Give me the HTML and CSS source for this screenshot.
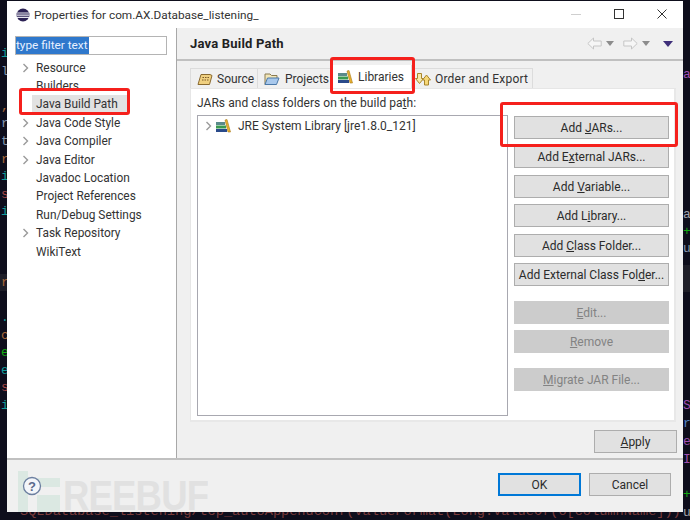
FILE: index.html
```html
<!DOCTYPE html>
<html lang="en">
<head>
<meta charset="utf-8">
<title>Properties for com.AX.Database_listening_</title>
<link rel="stylesheet" href="styles.css">
</head>
<body>
<div class="code code-left">
  <div class="teal">i</div><div class="steel">l</div><div class="rust">&nbsp;</div><div class="rust">,</div><div class="steel">r</div><div class="steel">t</div><div class="rust">r</div><div class="teal">i</div><div class="red">s</div><div class="teal">i</div>
  <div>&nbsp;</div><div>&nbsp;</div><div>&nbsp;</div><div class="rust band">r</div><div>&nbsp;</div><div class="teal">.</div><div class="rust">c</div><div class="green">e</div><div class="teal">e</div><div class="red">s</div><div class="teal">i</div>
</div>
<div class="code code-right">
  <div class="purple">a</div>
  <div class="group-b"><div class="grey">a</div><div class="green">+</div><div class="steel">u</div></div>
  <div class="band band-r">&nbsp;</div>
  <div class="group-c"><div class="purple">S</div><div class="blue">r</div><div class="purple">e</div><div class="purple">I</div><div>&nbsp;</div><div class="green">+</div><div class="grey">u</div></div>
</div>
<div class="code-bottom">SQLDatabase_listening/tcp_autoAppendConf(valueFormat(Long.valueOf(o[columnName]))</div>

<div class="window">
  <header class="titlebar">
    <svg class="app-icon" viewBox="0 0 14 14"><circle cx="7" cy="7" r="6.5" fill="#2c2255"/><path d="M1 5h12M.6 7.2h12.8M1 9.4h12" stroke="#e8e8f0" stroke-width="1.2"/></svg>
    <span class="title">Properties for com.AX.Database_listening_</span>
    <div class="winctl">
      <svg viewBox="0 0 10 10" class="wc"><path d="M0 5.500h10" stroke="#cfcfcf"/></svg>
      <svg viewBox="0 0 10 10" class="wc"><rect x=".5" y=".5" width="9" height="9" fill="none" stroke="#333"/></svg>
      <svg viewBox="0 0 10 10" class="wc"><path d="M.5.5l9 9M9.500.5l-9 9" stroke="#333"/></svg>
    </div>
  </header>

  <div class="main">
    <aside class="side">
      <div class="filter"><span class="filter-sel">type filter text</span></div>
      <ul class="tree">
        <li><svg class="chev" viewBox="0 0 7 10"><path d="M1.500 1l4 4-4 4" fill="none" stroke="#9a9a9a" stroke-width="1.400"/></svg>Resource</li>
        <li>Builders</li>
        <li class="sel"><span>Java Build Path</span></li>
        <li><svg class="chev" viewBox="0 0 7 10"><path d="M1.500 1l4 4-4 4" fill="none" stroke="#9a9a9a" stroke-width="1.400"/></svg>Java Code Style</li>
        <li><svg class="chev" viewBox="0 0 7 10"><path d="M1.500 1l4 4-4 4" fill="none" stroke="#9a9a9a" stroke-width="1.400"/></svg>Java Compiler</li>
        <li><svg class="chev" viewBox="0 0 7 10"><path d="M1.500 1l4 4-4 4" fill="none" stroke="#9a9a9a" stroke-width="1.400"/></svg>Java Editor</li>
        <li>Javadoc Location</li>
        <li>Project References</li>
        <li>Run/Debug Settings</li>
        <li><svg class="chev" viewBox="0 0 7 10"><path d="M1.500 1l4 4-4 4" fill="none" stroke="#9a9a9a" stroke-width="1.400"/></svg>Task Repository</li>
        <li>WikiText</li>
      </ul>
    </aside>

    <section class="content">
      <div class="head">
        <h1>Java Build Path</h1>
        <div class="nav">
          <svg class="nav-arrow" viewBox="0 0 15 13"><path d="M.8 6.500L6.500 1v3h7.700v5H6.500v3z" fill="#f6f6f6" stroke="#c6c6c6"/></svg>
          <span class="drop"></span>
          <svg class="nav-arrow" viewBox="0 0 15 13"><path d="M14.200 6.500L8.500 1v3H.8v5h7.700v3z" fill="#f6f6f6" stroke="#c6c6c6"/></svg>
          <span class="drop"></span>
          <span class="drop drop-menu"></span>
        </div>
      </div>

      <div class="tabs">
        <div class="tab tab-source">
          <svg class="tab-ic" viewBox="0 0 16 14"><path d="M1 12.500L4 2.500h9l2 1-2.500 9z" fill="#f0d080" stroke="#8a6a30"/><path d="M5.500 5.500h7M5 8h6.500" stroke="#7a5a28" stroke-dasharray="1.500 1"/></svg>
          Source</div>
        <div class="tab tab-projects">
          <svg class="tab-ic" viewBox="0 0 16 14"><path d="M1 12.500V2h5l1.500 1.500H13V6" fill="#f2e6b8" stroke="#8a7a50"/><path d="M1 12.500L3.500 6H15l-2.500 6.500z" fill="#a8c8ec" stroke="#4a78a8"/></svg>
          Projects</div>
        <div class="tab tab-active">
          <svg class="tab-ic" viewBox="0 0 16 14"><use href="#lib"/></svg>
          Libraries</div>
        <div class="tab tab-order">
          <svg class="tab-ic" viewBox="0 0 16 14"><path d="M2 1h4v5h2L4 11 0 6h2z" transform="translate(.5 .5)" fill="#f7e9a8" stroke="#a8852c"/><path d="M10 13V8H8l4-5 4 5h-2v5z" transform="translate(-.5 0)" fill="#f7d878" stroke="#a8852c"/></svg>
          Order and Export</div>
      </div>

      <div class="panel">
        <div class="panel-label">JARs and class folders on the build pa<u>t</u>h:</div>
        <div class="panel-row">
          <div class="lib-tree">
            <div class="lib-row">
              <svg class="chev chev-lib" viewBox="0 0 7 10"><path d="M1.500 1l4 4-4 4" fill="none" stroke="#9a9a9a" stroke-width="1.400"/></svg>
              <svg class="tab-ic" viewBox="0 0 16 14"><defs><symbol id="lib" viewBox="0 0 16 14"><path d="M10 1l2-.5 3.500 12.500h-2.500z" fill="#e8b030" stroke="#a87818" stroke-width=".6"/><rect x="1" y="3" width="9" height="3" fill="#5a8a8a"/><rect x="1" y="6.500" width="10" height="3" fill="#3a9a50"/><rect x="1" y="10" width="11" height="3" fill="#2a4a8a"/></symbol></defs><use href="#lib"/></svg>
              <span>JRE System Library [jre1.8.0_121]</span>
            </div>
          </div>
          <div class="btns">
            <button class="btn">Add <u>J</u>ARs...</button>
            <button class="btn">Add E<u>x</u>ternal JARs...</button>
            <button class="btn">Add <u>V</u>ariable...</button>
            <button class="btn">Add L<u>i</u>brary...</button>
            <button class="btn">Add <u>C</u>lass Folder...</button>
            <button class="btn">Add External Class Fol<u>d</u>er...</button>
            <button class="btn off sep"><u>E</u>dit...</button>
            <button class="btn off"><u>R</u>emove</button>
            <button class="btn off sep"><u>M</u>igrate JAR File...</button>
          </div>
        </div>
      </div>

      <div class="apply-row"><button class="btn apply"><u>A</u>pply</button></div>
    </section>
  </div>

  <footer class="foot">
    <div class="watermark">
      <svg class="wm-f" viewBox="0 0 42 41"><path d="M0 0h10v41H0z" fill="#dbe8e2"/><path d="M19 7h23v9H19zM19 24h23v17H19z" fill="#dbe8e2"/></svg>
      <span class="wm-text">REEBUF</span>
    </div>
    <svg class="help" viewBox="0 0 20 20"><circle cx="10" cy="10" r="8.500" fill="#f4f6fa" stroke="#6c7fa0" stroke-width="1.300"/><text x="10" y="14.500" text-anchor="middle" class="help-q">?</text></svg>
    <div class="foot-btns">
      <button class="btn ok">OK</button>
      <button class="btn cancel">Cancel</button>
    </div>
  </footer>

  <div class="mark mark-path"></div>
  <div class="mark mark-tab"></div>
  <div class="mark mark-add"></div>
</div>
</body>
</html>
```

FILE: styles.css
```css
* { box-sizing: border-box; }
html, body { margin: 0; padding: 0; }
body {
  width: 690px;
  height: 520px;
  overflow: hidden;
  position: relative;
  background: #0e0e1c;
  font-family: Roboto, "Liberation Sans", sans-serif;
  font-size: 11.800px;
  color: #333;
}

/* editor text behind the dialog */
.code {
  position: absolute;
  width: 7px;
  overflow: hidden;
  font-family: "Liberation Mono", monospace;
  font-size: 13px;
  line-height: 17.600px;
  white-space: nowrap;
}
.code-left { left: 0; top: 45px; text-indent: 1px; }
.code-right { left: 683px; top: 66px; line-height: 17.900px; }
.group-b { margin-top: 122px; line-height: 17px; }
.band-r { width: 7px; height: 27px; margin-top: 8px; }
.group-c { margin-top: 105px; }
.band { background: #1e1e28; }
.teal { color: #129c9c; }
.steel { color: #8496ae; }
.rust { color: #a8683a; }
.red { color: #a84848; }
.green { color: #12a812; }
.purple { color: #a050b0; }
.blue { color: #5080c0; }
.grey { color: #a0a0a8; }
.code-bottom {
  position: absolute;
  left: 20px;
  top: 512px;
  width: 670px;
  height: 8px;
  overflow: hidden;
  white-space: nowrap;
  font-family: "Liberation Mono", monospace;
  font-size: 13.600px;
  line-height: 0;
  color: #7a3a3a;
}

/* dialog */
.window {
  position: relative;
  z-index: 1;
  width: 676px;
  height: 511px;
  margin: 1px 0 0 7px;
  background: #f0f0f0;
  display: flex;
  flex-direction: column;
}
.titlebar {
  height: 27px;
  flex: none;
  background: #fff;
  display: flex;
  align-items: center;
  padding-left: 9px;
}
.app-icon { width: 14px; height: 14px; margin-right: 4px; }
.title { flex: 1; }
.winctl { display: flex; gap: 33px; margin-right: 16px; margin-top: -2px; }
.wc { width: 10px; height: 10px; display: block; }

.main { flex: none; height: 430px; display: flex; }
.side {
  width: 170px;
  flex: none;
  background: #fff;
  border-right: 1px solid #a8a8a8;
  padding: 8px 0 0 8px;
}
.filter {
  width: 152px;
  height: 19px;
  border: 1px solid #b4b4b4;
  background: #fff;
  line-height: 16px;
}
.filter-sel { display: inline-block; height: 17px; padding: 0 1px 0 0; background: #2f78cc; color: #e8f0ff; }
.tree {
  list-style: none;
  margin: 3.600px 0 0;
  padding: 0;
  line-height: 18.400px;
  font-size: 11.900px;
}
.tree li { position: relative; padding-left: 21px; height: 18.400px; }
.tree .chev { position: absolute; left: 7px; top: 4px; }
.chev { width: 7px; height: 10px; display: block; flex: none; }
.tree .sel span { display: inline-block; background: #e2e2e2; margin-left: -4px; padding: 0 4px; width: 96px; white-space: nowrap; }

.content { flex: 1; min-width: 0; display: flex; flex-direction: column; }
.head {
  height: 33px;
  flex: none;
  border-bottom: 2px solid #c0c0c0;
  display: flex;
  align-items: center;
  justify-content: space-between;
  padding: 0 10px 0 13px;
}
.head h1 { margin: 0; font-size: 13px; font-weight: 700; letter-spacing: .2px; color: #222; }
.nav { display: flex; align-items: center; gap: 4px; }
.nav-arrow { width: 15px; height: 13px; display: block; }
.drop { width: 0; height: 0; border: 4px solid transparent; border-top: 5px solid #8c8c8c; border-bottom: 0; margin-right: 5px; }
.drop-menu { border-width: 5px; border-top: 6px solid #3f2f7a; border-bottom: 0; margin: 0 0 0 4px; }

.tabs { display: flex; height: 20px; margin: 7px 0 0 13px; flex: none; white-space: nowrap; font-size: 12px; }
.tab {
  display: flex;
  align-items: center;
  gap: 5px;
  padding-left: 6px;
  background: #f0f0f0;
  border: 1px solid #dcdcdc;
  border-bottom: 0;
  border-left: 0;
}
.tab-source { width: 68px; gap: 4px; border-left: 1px solid #dcdcdc; }
.tab-projects { width: 73px; }
.tab-active { width: 81px; background: #fff; margin-top: -3px; height: 23px; border-top: 0; }
.tab-order { width: 121px; gap: 4px; padding-left: 3px; letter-spacing: .2px; }
.tab-ic { width: 16px; height: 14px; display: block; flex: none; }

.panel {
  margin: 0 7px 0 13px;
  height: 334px;
  flex: none;
  background: #fff;
  border: 1px solid #e6e6e6;
  border-right: 2px solid #e8e8e8;
  border-bottom: 2px solid #e8e8e8;
  padding: 7px 6px 0;
}
.panel-label { height: 19px; line-height: 15px; font-size: 12px; letter-spacing: .05px; }
.panel-row { display: flex; gap: 6px; }
.lib-tree { width: 311px; height: 301px; flex: none; border: 1px solid #a8a8b0; padding: 2px 0 0 7px; }
.lib-row { display: flex; align-items: center; height: 16px; font-size: 12px; }
.chev-lib { margin-right: 3px; }
.lib-row span { margin-left: 7px; }
.btns { width: 155px; flex: none; display: flex; flex-direction: column; gap: 6.400px; margin-top: 1px; }
.btn {
  height: 23px;
  padding: 1px 0 0;
  font: inherit;
  font-size: 12px;
  background: #e1e1e1;
  border: 1px solid #adadad;
  color: #2b2b2b;
  white-space: nowrap;
}
.off { background: #cccccc; border-color: #cccccc; color: #838383; }
.sep { margin-top: 8.500px; }

.apply-row { flex: 1; display: flex; justify-content: flex-end; padding: 8px 6px 0 0; }
.apply { width: 83px; }

.foot {
  flex: 1;
  position: relative;
  border-top: 2px solid #c0c0c0;
  display: flex;
  align-items: center;
  justify-content: space-between;
  padding: 0 12px 0 15px;
}
.watermark { position: absolute; left: 11px; bottom: 0; height: 41px; width: 190px; overflow: hidden; display: flex; }
.wm-f { width: 42px; height: 41px; display: block; flex: none; }
.wm-text {
  font-family: "Liberation Sans", sans-serif;
  font-weight: 700;
  font-size: 43px;
  line-height: 49px;
  color: #e1e1e1;
  letter-spacing: -1px;
  transform: scaleX(.85);
  transform-origin: 0 0;
  margin-left: 3px;
  white-space: nowrap;
}
.help { width: 20px; height: 20px; display: block; position: relative; margin-top: -1px; }
.help-q { font-family: "Liberation Sans", sans-serif; font-weight: 700; font-size: 13px; fill: #5a6a8c; }
.foot-btns { display: flex; gap: 8px; position: relative; margin-top: -1px; margin-bottom: 3px; }
.ok { width: 83px; border: 2px solid #0078d7; }
.cancel { width: 82px; }

/* red annotation rectangles drawn on top of the screenshot */
.mark { position: absolute; border: 3px solid #f5201c; border-radius: 3px; }
.mark-path { left: 12px; top: 87px; width: 111px; height: 27px; }
.mark-tab { left: 323px; top: 56px; width: 85px; height: 37px; }
.mark-add { left: 493px; top: 101px; width: 178px; height: 45px; }
```
